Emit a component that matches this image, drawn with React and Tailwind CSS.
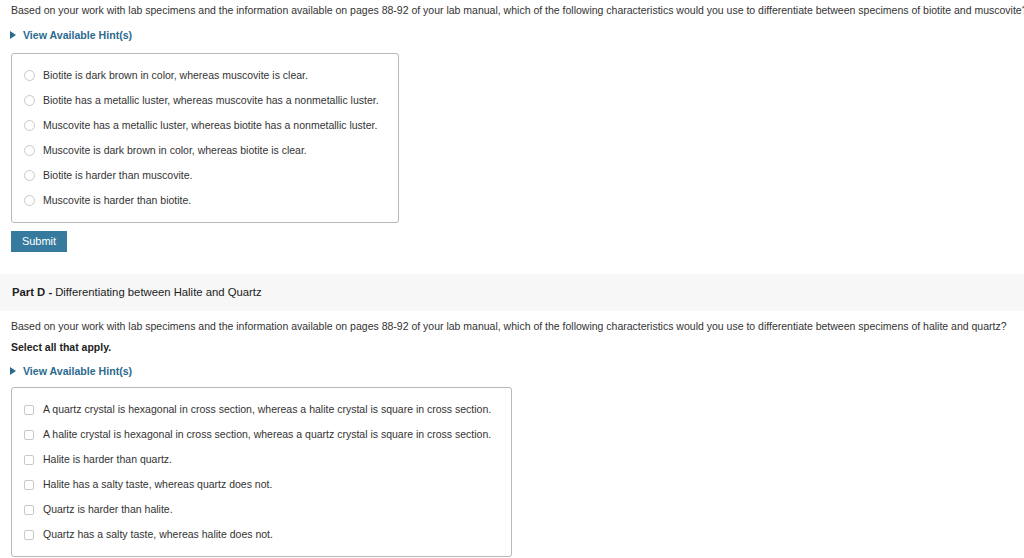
import { useState } from 'react'

const partC = [
  'Biotite is dark brown in color, whereas muscovite is clear.',
  'Biotite has a metallic luster, whereas muscovite has a nonmetallic luster.',
  'Muscovite has a metallic luster, whereas biotite has a nonmetallic luster.',
  'Muscovite is dark brown in color, whereas biotite is clear.',
  'Biotite is harder than muscovite.',
  'Muscovite is harder than biotite.',
]

const partD = [
  'A quartz crystal is hexagonal in cross section, whereas a halite crystal is square in cross section.',
  'A halite crystal is hexagonal in cross section, whereas a quartz crystal is square in cross section.',
  'Halite is harder than quartz.',
  'Halite has a salty taste, whereas quartz does not.',
  'Quartz is harder than halite.',
  'Quartz has a salty taste, whereas halite does not.',
]

function Hint() {
  return (
    <div className="flex items-center h-[12px] leading-[12px] font-bold text-[#2b6a8f] text-[10.6px]">
      <svg width="6" height="8" viewBox="0 0 6 8" className="ml-[-1px] mr-[7px]">
        <path d="M0 0 L6 4 L0 8 Z" fill="#2b6a8f" />
      </svg>
      View Available Hint(s)
    </div>
  )
}

export default function App() {
  const [picked, setPicked] = useState(null)
  const [checked, setChecked] = useState([])

  function toggle(i) {
    setChecked((c) => (c.includes(i) ? c.filter((x) => x !== i) : [...c, i]))
  }

  return (
    <div className="w-[1024px] h-[558px] overflow-hidden bg-white text-[#333] font-['Liberation_Sans',Arial,sans-serif]">
      <div className="pl-[11px]">
        <p className="pt-[4px] h-[16px] leading-[12px] text-[10.5px] whitespace-nowrap">
          Based on your work with lab specimens and the information available on pages 88-92 of your lab manual, which of the following characteristics would you use to differentiate between specimens of biotite and muscovite?
        </p>
        <div className="mt-[13px]">
          <Hint />
        </div>
        <div className="mt-[12px] w-[388px] h-[170px] border border-[#b8b8b8] rounded-[3px] pt-[9px] pl-[12px]">
          {partC.map((t, i) => (
            <label key={i} className="flex items-center h-[25px] gap-[8px] text-[10.5px] cursor-pointer">
              <span
                onClick={() => setPicked(i)}
                className="w-[11px] h-[11px] rounded-full border border-[#c9c9c9] bg-white flex items-center justify-center"
              >
                {picked === i ? <span className="w-[5px] h-[5px] rounded-full bg-[#367b9d]" /> : null}
              </span>
              <span onClick={() => setPicked(i)}>{t}</span>
            </label>
          ))}
        </div>
        <button className="mt-[8px] w-[56px] h-[21px] bg-[#367b9d] text-white text-[11px] leading-[21px] text-center">
          Submit
        </button>
      </div>

      <div className="mt-[22px] h-[37px] bg-[#f7f7f7] flex items-center pl-[12px] text-[11.3px] text-[#222]">
        <span className="font-bold">Part D -</span>
        <span className="ml-[3px]">Differentiating between Halite and Quartz</span>
      </div>

      <div className="pl-[11px]">
        <p className="mt-[9px] h-[12px] leading-[12px] text-[10.5px] whitespace-nowrap">
          Based on your work with lab specimens and the information available on pages 88-92 of your lab manual, which of the following characteristics would you use to differentiate between specimens of halite and quartz?
        </p>
        <p className="mt-[9px] h-[12px] leading-[12px] text-[10.5px] font-bold text-[#222]">Select all that apply.</p>
        <div className="mt-[12px]">
          <Hint />
        </div>
        <div className="mt-[10px] w-[501px] h-[170px] border border-[#b8b8b8] rounded-[3px] pt-[9px] pl-[12px]">
          {partD.map((t, i) => (
            <label key={i} className="flex items-center h-[25px] gap-[9px] text-[10.5px] cursor-pointer">
              <span
                onClick={() => toggle(i)}
                className="w-[10px] h-[10px] rounded-[2px] border border-[#c9c9c9] bg-white flex items-center justify-center text-[8px] leading-none text-[#367b9d]"
              >
                {checked.includes(i) ? '✓' : null}
              </span>
              <span onClick={() => toggle(i)}>{t}</span>
            </label>
          ))}
        </div>
      </div>
    </div>
  )
}
